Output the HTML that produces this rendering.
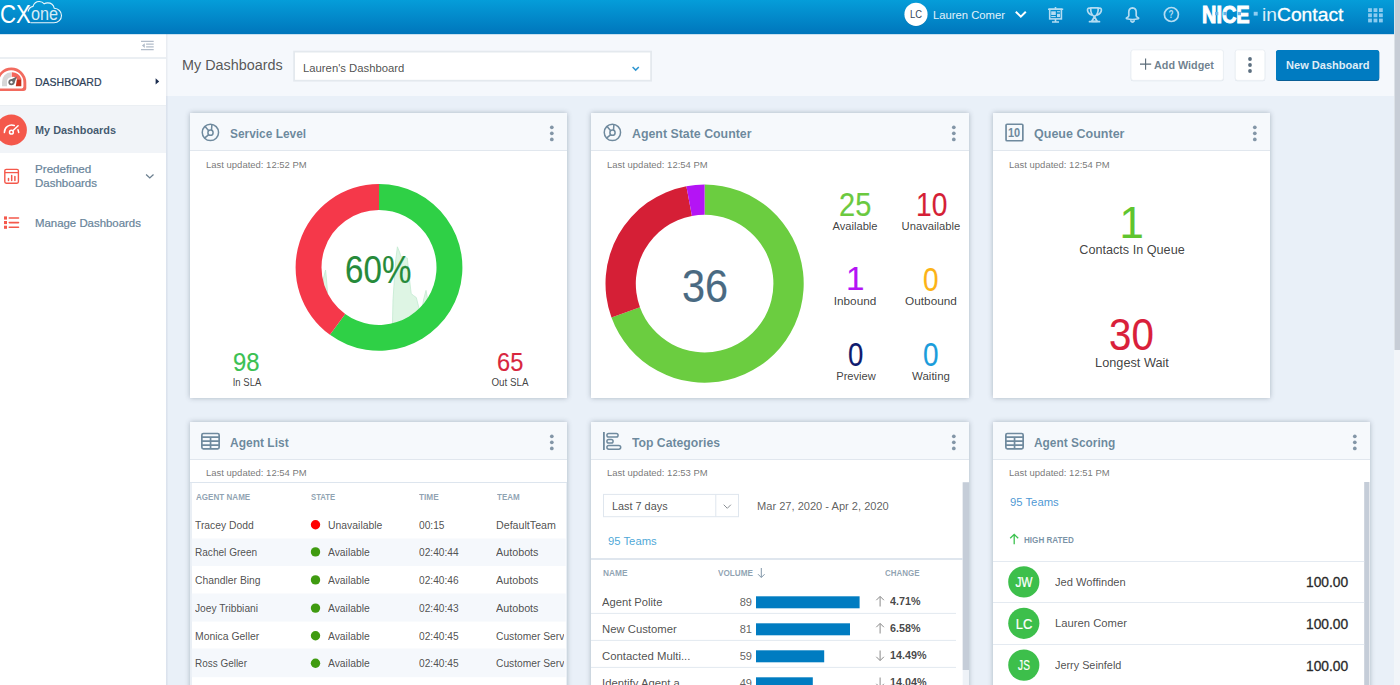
<!DOCTYPE html>
<html lang="en"><head><meta charset="utf-8"><title>My Dashboards</title>
<style>
*{margin:0;padding:0;box-sizing:border-box}
html,body{width:1400px;height:685px;overflow:hidden;background:#e9f0f8}
body{font-family:"Liberation Sans", "Noto Sans CJK SC", sans-serif;position:relative}
#root{position:absolute;left:0;top:0;width:1400px;height:685px;overflow:hidden}
#root div,#root svg{position:absolute}
#root .t{white-space:nowrap}
</style></head>
<body><div id="root">
<div style="left:0px;top:0px;width:1400px;height:685px;background:#e9f0f8"></div>
<div style="left:166px;top:34px;width:1234px;height:62px;background:#f5f8fc"></div>
<div style="left:0px;top:34px;width:166px;height:651px;background:#fff"></div>
<div style="left:166px;top:34px;width:1.5px;height:62px;background:linear-gradient(90deg,#e6eaf0,#f2f5f9)"></div>
<div style="left:166px;top:96px;width:1.5px;height:589px;background:linear-gradient(90deg,#d9e1ec,#e4eaf3)"></div>
<div style="left:0px;top:57px;width:166px;height:2px;background:#ebeff3"></div>
<div style="left:0px;top:105px;width:166px;height:1px;background:#ebeff3"></div>
<div style="left:0px;top:106px;width:166px;height:47px;background:#f1f4f8"></div>
<div style="left:0px;top:0px;width:1400px;height:34px;background:linear-gradient(#059dd9,#0076bc)"></div>
<div style="left:0px;top:34px;width:1400px;height:1px;background:rgba(0,115,186,.18)"></div>
<div class="t" style="top:-5.17px;font-size:26.15px;line-height:39px;color:#fff;left:-0.4px;transform:scaleX(0.8502);transform-origin:left center;">CX</div>
<svg style="left:26px;top:0px;width:38px;height:25px" viewBox="26 0 38 25"><path d="M28.2 11.200c.5-2.500 2.200-4.300 4.800-4.800c.9-2.900 3.300-4.900 6.300-4.900c2 0 3.700.8 4.900 2.300c1-.6 2.200-.9 3.400-.9c3.300 0 6 2.300 6.700 5.400c3.900.3 7.200 3.200 7.200 7.100c0 4.200-3.300 7.400-7.500 7.400H31" fill="none" stroke="#fff" stroke-width="1.100" stroke-linecap="round" opacity=".92"/></svg>
<div class="t" style="top:-0.59px;font-size:19.18px;line-height:29px;color:rgba(255,255,255,.85);left:31px;transform:scaleX(0.8443);transform-origin:left center;">one</div>
<svg style="left:903px;top:1px;width:26px;height:27px" viewBox="903 1 26 27"><circle cx="916" cy="14.700" r="11.600" fill="rgba(0,40,80,.18)"/><circle cx="916" cy="14.300" r="11.600" fill="#fff"/></svg>
<div class="t" style="top:7.01px;font-size:10.4px;line-height:16px;color:#33475b;left:916px;width:300px;margin-left:-150px;text-align:center;transform:scaleX(0.9001);transform-origin:center center;">LC</div>
<div class="t" style="top:6.7px;font-size:10.8px;line-height:16px;color:#e2f2fb;left:933px;transform:scaleX(1.0423);transform-origin:left center;">Lauren Comer</div>
<svg style="left:1013px;top:8px;width:16px;height:12px" viewBox="1013 8 16 12"><path d="M1015.800 11.700l5 5l5-5" fill="none" stroke="#fff" stroke-width="2"/></svg>
<svg style="left:1046px;top:5px;width:20px;height:20px" viewBox="1046 5 20 20"><g fill="none" stroke="#b4dcf2" stroke-width="1.600"><path d="M1048 9.200h15.200M1055.500 7v2.200M1055.500 19v3M1052 22h7"/><rect x="1049.700" y="9.200" width="11.700" height="9.700"/></g><g fill="#b4dcf2"><rect x="1051.200" y="11.300" width="4.600" height="3.700"/><rect x="1051.200" y="16" width="4.600" height="1.100"/><rect x="1057" y="11.200" width="3" height="1.100"/><rect x="1057" y="13.800" width="3" height="3.300"/></g></svg>
<svg style="left:1085px;top:5px;width:20px;height:20px" viewBox="1085 5 20 20"><g fill="none" stroke="#b4dcf2" stroke-width="1.700" stroke-linejoin="round"><path d="M1090.700 7.900h7.500c.2 4.200-1 7.200-3.750 8.700c-2.750-1.500-3.950-4.500-3.750-8.700z"/><path d="M1090.500 8.500c-1.600-.9-3 0-3 1.500c0 2.200 2 4.200 4.600 5.300M1098.400 8.500c1.600-.9 3 0 3 1.500c0 2.200-2 4.200-4.600 5.300"/><path d="M1094.450 16.800l-2.700 4.500h5.400z"/><path d="M1089.500 21.700h10" stroke-linecap="round"/></g></svg>
<svg style="left:1124px;top:5px;width:18px;height:20px" viewBox="1124 5 18 20"><g fill="none" stroke="#b4dcf2" stroke-width="1.700" stroke-linejoin="round"><path d="M1132.500 7.800c-2.400.3-3.700 2-3.700 4.300v3.700c0 .9-.8 1.400-2 1.900c-.6.300-.6.900 0 1.100c3.400.9 8 .9 11.400 0c.6-.2.600-.8 0-1.100c-1.200-.5-2-1-2-1.900v-3.700c0-2.300-1.300-4-3.700-4.300z"/><path d="M1130.800 20.900c.5.900 1.100 1.200 1.700 1.200s1.200-.3 1.700-1.200" stroke-linecap="round"/></g></svg>
<svg style="left:1162px;top:5px;width:19px;height:19px" viewBox="1162 5 19 19"><circle cx="1171.400" cy="14.500" r="7" fill="none" stroke="#b4dcf2" stroke-width="1.700"/></svg>
<div class="t" style="top:6.31px;font-size:10.5px;line-height:16px;color:#b4dcf2;font-weight:700;left:1171.4px;width:300px;margin-left:-150px;text-align:center;transform:scaleX(0.7810);transform-origin:center center;">?</div>
<div class="t" style="top:-2.44px;font-size:23.18px;line-height:35px;color:#fff;font-weight:700;-webkit-text-stroke:1px #fff;left:1202.2px;transform:scaleX(0.8610);transform-origin:left center;">NICE</div>
<svg style="left:1214px;top:11px;width:46px;height:6px" viewBox="1214 11 46 6"><g fill="#6ab6e9"><rect x="1215" y="11.900" width="3.300" height="3.300"/><rect x="1223.400" y="11.900" width="3.300" height="3.300"/><rect x="1237.700" y="11.900" width="3.300" height="3.300"/><rect x="1253.700" y="11.800" width="4" height="3.800" fill="#8fcdf1"/></g></svg>
<div class="t" style="top:0.53px;font-size:18.37px;line-height:28px;color:#fff;left:1262px;transform:scaleX(1.0489);transform-origin:left center;"><span style="opacity:.85">in</span><span style="-webkit-text-stroke:.3px #fff">Contact</span></div>
<svg style="left:1367px;top:7px;width:17px;height:17px" viewBox="1367 7 17 17"><g fill="#8ccbef"><rect x="1368.1" y="8.2" width="3.800" height="3.800"/><rect x="1373.55" y="8.2" width="3.800" height="3.800"/><rect x="1379" y="8.2" width="3.800" height="3.800"/><rect x="1368.1" y="13.4" width="3.800" height="3.800"/><rect x="1373.55" y="13.4" width="3.800" height="3.800"/><rect x="1379" y="13.4" width="3.800" height="3.800"/><rect x="1368.1" y="18.6" width="3.800" height="3.800"/><rect x="1373.55" y="18.6" width="3.800" height="3.800"/><rect x="1379" y="18.6" width="3.800" height="3.800"/></g></svg>
<div style="left:1394px;top:0px;width:6px;height:685px;background:#f3f6f9"></div>
<div style="left:1394px;top:0px;width:1px;height:349px;background:linear-gradient(90deg,#7fb4d6,#c5ccd6);opacity:.0"></div>
<svg style="left:1394px;top:0px;width:6px;height:685px" viewBox="1394 0 6 685"><rect x="1394.500" y="0" width="5.500" height="685" fill="#f2f5f9"/><rect x="1394.500" y="-1" width="5.500" height="351" fill="#c7cdd6"/></svg>
<svg style="left:140px;top:40px;width:15px;height:11px" viewBox="140 40 15 11"><g fill="none" stroke="#b3bdca" stroke-width="1.300"><path d="M141 41.400h12.700M146.100 44.200h7.600M146.100 46.900h7.600M141 49.600h12.700"/></g><path d="M141.900 45.600l2.900-2.300v4.600z" fill="#b3bdca"/></svg>
<svg style="left:0px;top:66px;width:28px;height:26px" viewBox="0 66 28 26"><path d="M-3.600 90.900V82.500A14.950 14.950 0 0 1 26.300 82.500V87.900a3 3 0 0 1-3 3z" fill="#f26b5f"/><path d="M-1 88.600V82.500A12.200 12.200 0 0 1 23.400 82.500V86.800a1.800 1.800 0 0 1-1.800 1.800z" fill="#fff"/><path d="M2 86.300V82.200A9.400 9.400 0 0 1 11.100 72.200V77.300A4.300 4.300 0 0 0 7 82.200V86.300z" fill="#d7d7d7"/><path d="M11.700 72.200A9.900 9.900 0 0 1 21.600 79.200H17A5 5 0 0 0 11.700 77z" fill="#f4655a"/><path d="M16.900 79.200H21.300V86.200H15.800z" fill="#c8301c"/><path d="M9.300 80.200L16.900 76.600L13.900 84.600z" fill="#6a6a6a"/><circle cx="11.400" cy="82.200" r="3" fill="#6a6a6a"/><circle cx="11.400" cy="82.200" r="1.200" fill="#fff"/></svg>
<div class="t" style="top:73.8px;font-size:11px;line-height:16px;color:#2c3e57;-webkit-text-stroke:0.2px #2c3e57;left:35px;transform:scaleX(0.9538);transform-origin:left center;">DASHBOARD</div>
<svg style="left:154px;top:77px;width:7px;height:9px" viewBox="154 77 7 9"><path d="M155.600 78.200L159.200 81.400L155.600 84.600z" fill="#1c2d4f"/></svg>
<svg style="left:0px;top:114px;width:28px;height:32px" viewBox="0 114 28 32"><circle cx="11.400" cy="129.900" r="15.500" fill="#f4584b"/><g fill="none" stroke="#fff" stroke-width="1.500" stroke-linecap="round"><path d="M4.400 132.600A7.300 7.300 0 0 1 14.300 125.500"/><path d="M12.800 130.800L18.100 125.700"/><path d="M18 129.700L18.700 132.400"/><circle cx="11.400" cy="132.200" r="1.900"/></g></svg>
<div class="t" style="top:122.2px;font-size:10.8px;line-height:16px;color:rgba(43,69,91,0.88);font-weight:700;left:35px;transform:scaleX(1.0080);transform-origin:left center;">My Dashboards</div>
<svg style="left:3px;top:167px;width:18px;height:18px" viewBox="3 167 18 18"><g fill="none" stroke="#f4584b"><rect x="4.800" y="169.400" width="13.600" height="13.800" rx="1.400" stroke-width="1.400"/><path d="M5 172.600h13.200" stroke-width="1.300"/><path d="M8.500 178.400v2.200M11.700 175.600v5M14.900 176.600v4" stroke-width="1.500" stroke-linecap="round"/></g></svg>
<div class="t" style="top:160.91px;font-size:11px;line-height:16px;color:#68849a;-webkit-text-stroke:0.2px #68849a;left:35px;transform:scaleX(1.0584);transform-origin:left center;">Predefined</div>
<div class="t" style="top:175.41px;font-size:11px;line-height:16px;color:#68849a;-webkit-text-stroke:0.2px #68849a;left:35px;transform:scaleX(1.0453);transform-origin:left center;">Dashboards</div>
<svg style="left:144px;top:172px;width:12px;height:8px" viewBox="144 172 12 8"><path d="M146.100 174.500l3.700 3.400l3.700-3.400" fill="none" stroke="#6b7f8f" stroke-width="1.300"/></svg>
<svg style="left:3px;top:215px;width:18px;height:15px" viewBox="3 215 18 15"><g fill="#f4584b"><rect x="4" y="216.400" width="3" height="3.200"/><rect x="4" y="221" width="3" height="3.100"/><rect x="4" y="225.700" width="3" height="3.100"/></g><path d="M9.300 218h9.200M9.300 222.600h9.200M9.300 227.200h9.200" stroke="#f4584b" stroke-width="1.600" stroke-linecap="round"/></svg>
<div class="t" style="top:214.61px;font-size:11px;line-height:16px;color:#68849a;-webkit-text-stroke:0.2px #68849a;left:35px;transform:scaleX(1.0369);transform-origin:left center;">Manage Dashboards</div>
<div class="t" style="top:54.91px;font-size:13.8px;line-height:21px;color:rgba(74,74,74,0.93);left:181.6px;transform:scaleX(1.0420);transform-origin:left center;">My Dashboards</div>
<svg style="left:292px;top:49px;width:362px;height:34px" viewBox="292 49 362 34"><rect x="294.100" y="51.600" width="357" height="29.100" fill="#fff" stroke="#e4e9ee" stroke-width="1.800"/><path d="M632.600 67l3.100 3.100l3.100-3.100" fill="none" stroke="#2f96d0" stroke-width="1.500"/></svg>
<div class="t" style="top:60.31px;font-size:10.8px;line-height:16px;color:rgba(68,68,68,0.93);left:302.6px;transform:scaleX(1.0463);transform-origin:left center;">Lauren's Dashboard</div>
<svg style="left:1128px;top:47px;width:254px;height:37px" viewBox="1128 47 254 37"><rect x="1130.700" y="50" width="93" height="31.200" rx="2.500" fill="#dfe5ec"/><rect x="1131" y="49.800" width="92.400" height="30.600" rx="2.500" fill="#fff" stroke="#e9edf2" stroke-width=".8"/><path d="M1145.600 58.500v11.200M1140 64.100h11.200" fill="none" stroke="#5a6b78" stroke-width="1.100"/><rect x="1234.900" y="50" width="30.300" height="31.200" rx="2.500" fill="#dfe5ec"/><rect x="1235.200" y="49.800" width="29.700" height="30.600" rx="2.500" fill="#fff" stroke="#e9edf2" stroke-width=".8"/><g fill="#5c6f80"><circle cx="1250" cy="59" r="1.900"/><circle cx="1250" cy="65" r="1.900"/><circle cx="1250" cy="71" r="1.900"/></g><rect x="1276" y="50.200" width="103.200" height="30.800" rx="2.500" fill="#0a5f96"/><rect x="1276" y="50" width="103.200" height="30" rx="2.500" fill="#007bc1"/></svg>
<div class="t" style="top:57.2px;font-size:10.8px;line-height:16px;color:rgba(92,111,128,0.88);font-weight:700;left:1154px;">Add Widget</div>
<div class="t" style="top:57.2px;font-size:10.8px;line-height:16px;color:rgba(255,255,255,0.88);font-weight:700;left:1286.2px;transform:scaleX(1.0239);transform-origin:left center;">New Dashboard</div>
<div style="left:190px;top:113px;width:377px;height:285px;background:#fff;box-shadow:0 0 5px rgba(30,45,65,.3)"></div>
<div style="left:190px;top:113px;width:377px;height:37px;background:#f6f9fc"></div>
<div style="left:190px;top:150px;width:377px;height:1px;background:#e1e7ee"></div>
<svg style="left:199.2px;top:121px;width:24px;height:24px" viewBox="199.2 121 24 24"><g fill="none" stroke="#6f8a9e" stroke-width="1.500"><circle cx="210.6" cy="132.4" r="8.150"/><circle cx="210.7" cy="132.7" r="2.600"/><path d="M212.1 124.4l-.4 5.700M205.3 126.4l3.600 4.300M204.7 138.1l4.300-3.500"/></g></svg>
<div class="t" style="top:124.9px;font-size:12.25px;line-height:18px;color:rgba(90,121,144,0.88);font-weight:700;left:230.3px;transform:scaleX(0.9717);transform-origin:left center;">Service Level</div>
<svg style="left:548px;top:124px;width:8px;height:20px" viewBox="548 124 8 20"><g fill="#8396a7"><circle cx="551.8" cy="127.3" r="1.850"/><circle cx="551.8" cy="133.35" r="1.850"/><circle cx="551.8" cy="139.4" r="1.850"/></g></svg>
<div class="t" style="top:157.8px;font-size:9.22px;line-height:14px;color:rgba(110,110,110,0.93);left:205.6px;transform:scaleX(1.0289);transform-origin:left center;">Last updated: 12:52 PM</div>
<svg style="left:190px;top:151px;width:377px;height:247px" viewBox="190 151 377 247"><path d="M320 312L321.500 292L323.500 278L325.600 270L326.600 281L327.600 293.700L329.500 312Z M392.300 332L393 300L395.500 262L397.400 246.800L399.500 252L401 256.700L404 257.300L407.300 258L409 275L411.200 293.700L413.500 295.500L416.300 297.600L418.900 307.800L421 316L423.500 300L426 290.400L427.800 300L430.500 314L430.500 332Z" fill="#def5e4" stroke="#c3ead0" stroke-width=".8"/><path d="M379.00 184.00A83.4 83.4 0 1 1 329.98 334.87L345.20 313.92A57.5 57.5 0 1 0 379.00 209.90Z" fill="#2fd046"/><path d="M329.98 334.87A83.4 83.4 0 0 1 379.00 184.00L379.00 209.90A57.5 57.5 0 0 0 345.20 313.92Z" fill="#f5384a"/></svg>
<div class="t" style="top:240.62px;font-size:38.3px;line-height:57px;color:#268a3a;-webkit-text-stroke:0.15px #268a3a;left:345.2px;transform:scaleX(0.8657);transform-origin:left center;">60%</div>
<div class="t" style="top:343.05px;font-size:26.15px;line-height:39px;color:#3bc153;-webkit-text-stroke:0.15px #3bc153;left:233.2px;transform:scaleX(0.9110);transform-origin:left center;">98</div>
<div class="t" style="top:374.9px;font-size:10px;line-height:15px;color:rgba(51,51,51,0.93);left:246.6px;width:300px;margin-left:-150px;text-align:center;transform:scaleX(0.9511);transform-origin:center center;">In SLA</div>
<div class="t" style="top:343.05px;font-size:26.15px;line-height:39px;color:#d8263e;-webkit-text-stroke:0.15px #d8263e;left:497.3px;transform:scaleX(0.9041);transform-origin:left center;">65</div>
<div class="t" style="top:374.9px;font-size:10px;line-height:15px;color:rgba(51,51,51,0.93);left:510.4px;width:300px;margin-left:-150px;text-align:center;transform:scaleX(0.9814);transform-origin:center center;">Out SLA</div>
<div style="left:591px;top:113px;width:378px;height:285px;background:#fff;box-shadow:0 0 5px rgba(30,45,65,.3)"></div>
<div style="left:591px;top:113px;width:378px;height:37px;background:#f6f9fc"></div>
<div style="left:591px;top:150px;width:378px;height:1px;background:#e1e7ee"></div>
<svg style="left:601px;top:121px;width:24px;height:24px" viewBox="601 121 24 24"><g fill="none" stroke="#6f8a9e" stroke-width="1.500"><circle cx="612.4" cy="132.4" r="8.150"/><circle cx="612.5" cy="132.7" r="2.600"/><path d="M613.9 124.4l-.4 5.700M607.1 126.4l3.600 4.300M606.5 138.1l4.300-3.500"/></g></svg>
<div class="t" style="top:124.9px;font-size:12.25px;line-height:18px;color:rgba(90,121,144,0.88);font-weight:700;left:632.1px;transform:scaleX(1.0094);transform-origin:left center;">Agent State Counter</div>
<svg style="left:950px;top:124px;width:8px;height:20px" viewBox="950 124 8 20"><g fill="#8396a7"><circle cx="953.8" cy="127.3" r="1.850"/><circle cx="953.8" cy="133.35" r="1.850"/><circle cx="953.8" cy="139.4" r="1.850"/></g></svg>
<div class="t" style="top:157.8px;font-size:9.22px;line-height:14px;color:rgba(110,110,110,0.93);left:606.6px;transform:scaleX(1.0289);transform-origin:left center;">Last updated: 12:54 PM</div>
<svg style="left:591px;top:151px;width:378px;height:247px" viewBox="591 151 378 247"><path d="M704.60 184.50A99.1 99.1 0 1 1 611.48 317.49L639.95 307.13A68.8 68.8 0 1 0 704.60 214.80Z" fill="#6bcd40"/><path d="M611.48 317.49A99.1 99.1 0 0 1 686.37 186.19L691.94 215.97A68.8 68.8 0 0 0 639.95 307.13Z" fill="#d51f36"/><path d="M686.37 186.19A99.1 99.1 0 0 1 704.60 184.50L704.60 214.80A68.8 68.8 0 0 0 691.94 215.97Z" fill="#b414f5"/></svg>
<div class="t" style="top:253.04px;font-size:45.37px;line-height:68px;color:#4a6a82;-webkit-text-stroke:0.15px #4a6a82;left:681.5px;transform:scaleX(0.9133);transform-origin:left center;">36</div>
<div class="t" style="top:179.57px;font-size:32.93px;line-height:49px;color:#6bc93f;-webkit-text-stroke:0.15px #6bc93f;left:839.1px;transform:scaleX(0.8816);transform-origin:left center;">25</div>
<div class="t" style="top:179.57px;font-size:32.93px;line-height:49px;color:#d51f36;-webkit-text-stroke:0.15px #d51f36;left:915.9px;transform:scaleX(0.8543);transform-origin:left center;">10</div>
<div class="t" style="top:254.4px;font-size:33.16px;line-height:50px;color:#b414f5;-webkit-text-stroke:0.15px #b414f5;left:846.02px;">1</div>
<div class="t" style="top:254.57px;font-size:33.36px;line-height:50px;color:#fcb316;-webkit-text-stroke:0.15px #fcb316;left:922.9px;transform:scaleX(0.8372);transform-origin:left center;">0</div>
<div class="t" style="top:329.57px;font-size:33.36px;line-height:50px;color:#0f1b6e;-webkit-text-stroke:0.15px #0f1b6e;left:847.6px;transform:scaleX(0.8264);transform-origin:left center;">0</div>
<div class="t" style="top:329.57px;font-size:33.36px;line-height:50px;color:#1b9ddb;-webkit-text-stroke:0.15px #1b9ddb;left:922.9px;transform:scaleX(0.8372);transform-origin:left center;">0</div>
<div class="t" style="top:217.81px;font-size:10.8px;line-height:16px;color:rgba(51,51,51,0.93);left:855.1px;width:300px;margin-left:-150px;text-align:center;transform:scaleX(1.0333);transform-origin:center center;">Available</div>
<div class="t" style="top:217.81px;font-size:10.8px;line-height:16px;color:rgba(51,51,51,0.93);left:930.7px;width:300px;margin-left:-150px;text-align:center;transform:scaleX(1.0410);transform-origin:center center;">Unavailable</div>
<div class="t" style="top:292.81px;font-size:10.8px;line-height:16px;color:rgba(51,51,51,0.93);left:855.4px;width:300px;margin-left:-150px;text-align:center;transform:scaleX(1.0913);transform-origin:center center;">Inbound</div>
<div class="t" style="top:292.81px;font-size:10.8px;line-height:16px;color:rgba(51,51,51,0.93);left:930.5px;width:300px;margin-left:-150px;text-align:center;transform:scaleX(1.0926);transform-origin:center center;">Outbound</div>
<div class="t" style="top:367.81px;font-size:10.8px;line-height:16px;color:rgba(51,51,51,0.93);left:855.5px;width:300px;margin-left:-150px;text-align:center;transform:scaleX(1.0293);transform-origin:center center;">Preview</div>
<div class="t" style="top:367.81px;font-size:10.8px;line-height:16px;color:rgba(51,51,51,0.93);left:930.5px;width:300px;margin-left:-150px;text-align:center;transform:scaleX(1.0606);transform-origin:center center;">Waiting</div>
<div style="left:993px;top:113px;width:277px;height:285px;background:#fff;box-shadow:0 0 5px rgba(30,45,65,.3)"></div>
<div style="left:993px;top:113px;width:277px;height:37px;background:#f6f9fc"></div>
<div style="left:993px;top:150px;width:277px;height:1px;background:#e1e7ee"></div>
<svg style="left:1003.5px;top:122px;width:24px;height:22px" viewBox="1003.5 122 24 22"><rect x="1005.55" y="124.25" width="16.800" height="16.500" rx="1" fill="none" stroke="#6f8a9e" stroke-width="1.700"/></svg>
<div class="t" style="top:122.97px;font-size:13px;line-height:20px;color:#6f8a9e;font-weight:700;left:1007.7px;transform:scaleX(0.8433);transform-origin:left center;">10</div>
<div class="t" style="top:124.9px;font-size:12.25px;line-height:18px;color:rgba(90,121,144,0.88);font-weight:700;left:1033.6px;transform:scaleX(1.0228);transform-origin:left center;">Queue Counter</div>
<svg style="left:1251px;top:124px;width:8px;height:20px" viewBox="1251 124 8 20"><g fill="#8396a7"><circle cx="1254.8" cy="127.3" r="1.850"/><circle cx="1254.8" cy="133.35" r="1.850"/><circle cx="1254.8" cy="139.4" r="1.850"/></g></svg>
<div class="t" style="top:157.8px;font-size:9.22px;line-height:14px;color:rgba(110,110,110,0.93);left:1008.6px;transform:scaleX(1.0289);transform-origin:left center;">Last updated: 12:54 PM</div>
<div class="t" style="top:189.91px;font-size:43.78px;line-height:66px;color:#5fc52e;-webkit-text-stroke:0.15px #5fc52e;left:1119.53px;">1</div>
<div class="t" style="top:241.01px;font-size:12.25px;line-height:18px;color:rgba(51,51,51,0.93);left:1131.5px;width:300px;margin-left:-150px;text-align:center;transform:scaleX(1.0323);transform-origin:center center;">Contacts In Queue</div>
<div class="t" style="top:303.47px;font-size:43.53px;line-height:65px;color:#d9203a;-webkit-text-stroke:0.15px #d9203a;left:1108.8px;transform:scaleX(0.9250);transform-origin:left center;">30</div>
<div class="t" style="top:353.7px;font-size:12.25px;line-height:18px;color:rgba(51,51,51,0.93);left:1131.5px;width:300px;margin-left:-150px;text-align:center;transform:scaleX(1.0385);transform-origin:center center;">Longest Wait</div>
<div style="left:190px;top:422px;width:377px;height:300px;background:#fff;box-shadow:0 0 5px rgba(30,45,65,.3)"></div>
<div style="left:190px;top:422px;width:377px;height:37px;background:#f6f9fc"></div>
<div style="left:190px;top:459px;width:377px;height:1px;background:#e1e7ee"></div>
<svg style="left:200.2px;top:431px;width:24px;height:22px" viewBox="200.2 431 24 22"><g fill="none" stroke="#6f8a9e" stroke-width="1.700"><rect x="202.05" y="433.5" width="17.300" height="15.300" rx="1.500"/><path d="M202.05 437.1h17.300M202.05 441.1h17.300M202.05 445.1h17.300M210.75 437.1v11.500"/></g></svg>
<div class="t" style="top:433.9px;font-size:12.25px;line-height:18px;color:rgba(90,121,144,0.88);font-weight:700;left:230.3px;transform:scaleX(0.9791);transform-origin:left center;">Agent List</div>
<svg style="left:548px;top:433px;width:8px;height:20px" viewBox="548 433 8 20"><g fill="#8396a7"><circle cx="551.8" cy="436.3" r="1.850"/><circle cx="551.8" cy="442.35" r="1.850"/><circle cx="551.8" cy="448.4" r="1.850"/></g></svg>
<div class="t" style="top:465.8px;font-size:9.22px;line-height:14px;color:rgba(110,110,110,0.93);left:205.6px;transform:scaleX(1.0289);transform-origin:left center;">Last updated: 12:54 PM</div>
<div style="left:190px;top:482px;width:377px;height:1px;background:#dde5ee"></div>
<div style="left:190px;top:483px;width:1.8px;height:220px;background:#eaeff5"></div>
<div style="left:565.7px;top:483px;width:1.3px;height:220px;background:#eaeff5"></div>
<svg style="left:191px;top:538px;width:376px;height:147px" viewBox="191 538 376 147"><rect x="191.800" y="538.5" width="373.900" height="27.5" fill="#f5f8fc"/><rect x="191.800" y="593.5" width="373.900" height="28.1" fill="#f5f8fc"/><rect x="191.800" y="648.5" width="373.900" height="28.7" fill="#f5f8fc"/></svg>
<div class="t" style="top:491.31px;font-size:8.4px;line-height:13px;color:rgba(129,150,168,0.88);font-weight:700;left:195.5px;transform:scaleX(0.9634);transform-origin:left center;">AGENT NAME</div>
<div class="t" style="top:491.31px;font-size:8.4px;line-height:13px;color:rgba(129,150,168,0.88);font-weight:700;left:311.1px;transform:scaleX(0.9261);transform-origin:left center;">STATE</div>
<div class="t" style="top:491.31px;font-size:8.4px;line-height:13px;color:rgba(129,150,168,0.88);font-weight:700;left:419.2px;transform:scaleX(0.9836);transform-origin:left center;">TIME</div>
<div class="t" style="top:491.31px;font-size:8.4px;line-height:13px;color:rgba(129,150,168,0.88);font-weight:700;left:496.7px;transform:scaleX(0.9552);transform-origin:left center;">TEAM</div>
<div class="t" style="top:517.81px;font-size:10px;line-height:15px;color:rgba(68,68,68,0.93);left:195.2px;transform:scaleX(1.0316);transform-origin:left center;">Tracey Dodd</div>
<div class="t" style="top:517.81px;font-size:10px;line-height:15px;color:rgba(68,68,68,0.93);left:328.1px;transform:scaleX(1.0410);transform-origin:left center;">Unavailable</div>
<div class="t" style="top:517.81px;font-size:10px;line-height:15px;color:rgba(68,68,68,0.93);left:419px;transform:scaleX(1.0187);transform-origin:left center;">00:15</div>
<div class="t" style="top:517.81px;font-size:10px;line-height:15px;color:rgba(68,68,68,0.93);left:496.1px;transform:scaleX(1.0679);transform-origin:left center;">DefaultTeam</div>
<div class="t" style="top:545.02px;font-size:10px;line-height:15px;color:rgba(68,68,68,0.93);left:195.2px;transform:scaleX(1.0066);transform-origin:left center;">Rachel Green</div>
<div class="t" style="top:545.01px;font-size:10px;line-height:15px;color:rgba(68,68,68,0.93);left:328.1px;transform:scaleX(1.0333);transform-origin:left center;">Available</div>
<div class="t" style="top:545.02px;font-size:10px;line-height:15px;color:rgba(68,68,68,0.93);left:419px;transform:scaleX(1.0161);transform-origin:left center;">02:40:44</div>
<div class="t" style="top:545.02px;font-size:10px;line-height:15px;color:rgba(68,68,68,0.93);left:496.1px;transform:scaleX(1.0764);transform-origin:left center;">Autobots</div>
<div class="t" style="top:573.02px;font-size:10px;line-height:15px;color:rgba(68,68,68,0.93);left:195.2px;transform:scaleX(1.0355);transform-origin:left center;">Chandler Bing</div>
<div class="t" style="top:573.01px;font-size:10px;line-height:15px;color:rgba(68,68,68,0.93);left:328.1px;transform:scaleX(1.0333);transform-origin:left center;">Available</div>
<div class="t" style="top:573.02px;font-size:10px;line-height:15px;color:rgba(68,68,68,0.93);left:419px;transform:scaleX(1.0161);transform-origin:left center;">02:40:46</div>
<div class="t" style="top:573.02px;font-size:10px;line-height:15px;color:rgba(68,68,68,0.93);left:496.1px;transform:scaleX(1.0764);transform-origin:left center;">Autobots</div>
<div class="t" style="top:601.22px;font-size:10px;line-height:15px;color:rgba(68,68,68,0.93);left:195.2px;transform:scaleX(1.0215);transform-origin:left center;">Joey Tribbiani</div>
<div class="t" style="top:601.21px;font-size:10px;line-height:15px;color:rgba(68,68,68,0.93);left:328.1px;transform:scaleX(1.0333);transform-origin:left center;">Available</div>
<div class="t" style="top:601.22px;font-size:10px;line-height:15px;color:rgba(68,68,68,0.93);left:419px;transform:scaleX(1.0161);transform-origin:left center;">02:40:43</div>
<div class="t" style="top:601.22px;font-size:10px;line-height:15px;color:rgba(68,68,68,0.93);left:496.1px;transform:scaleX(1.0764);transform-origin:left center;">Autobots</div>
<div class="t" style="top:628.91px;font-size:10px;line-height:15px;color:rgba(68,68,68,0.93);left:195.2px;transform:scaleX(1.0413);transform-origin:left center;">Monica Geller</div>
<div class="t" style="top:628.91px;font-size:10px;line-height:15px;color:rgba(68,68,68,0.93);left:328.1px;transform:scaleX(1.0333);transform-origin:left center;">Available</div>
<div class="t" style="top:628.91px;font-size:10px;line-height:15px;color:rgba(68,68,68,0.93);left:419px;transform:scaleX(1.0161);transform-origin:left center;">02:40:45</div>
<div style="left:490px;top:625.9px;width:74.300px;height:20px;overflow:hidden">
<div class="t" style="top:3.01px;font-size:10px;line-height:15px;color:rgba(68,68,68,0.93);left:6.1px;transform:scaleX(1.0250);transform-origin:left center;">Customer Service</div>
</div>
<div class="t" style="top:656.31px;font-size:10px;line-height:15px;color:rgba(68,68,68,0.93);left:195.2px;transform:scaleX(0.9943);transform-origin:left center;">Ross Geller</div>
<div class="t" style="top:656.31px;font-size:10px;line-height:15px;color:rgba(68,68,68,0.93);left:328.1px;transform:scaleX(1.0333);transform-origin:left center;">Available</div>
<div class="t" style="top:656.31px;font-size:10px;line-height:15px;color:rgba(68,68,68,0.93);left:419px;transform:scaleX(1.0161);transform-origin:left center;">02:40:45</div>
<div style="left:490px;top:653.3px;width:74.300px;height:20px;overflow:hidden">
<div class="t" style="top:3.01px;font-size:10px;line-height:15px;color:rgba(68,68,68,0.93);left:6.1px;transform:scaleX(1.0250);transform-origin:left center;">Customer Service</div>
</div>
<svg style="left:308px;top:515px;width:14px;height:170px" viewBox="308 515 14 170"><circle cx="315.500" cy="524.7" r="4.700" fill="#ff0000"/><circle cx="315.500" cy="551.9" r="4.700" fill="#3f9b10"/><circle cx="315.500" cy="579.9" r="4.700" fill="#3f9b10"/><circle cx="315.500" cy="608.1" r="4.700" fill="#3f9b10"/><circle cx="315.500" cy="635.8" r="4.700" fill="#3f9b10"/><circle cx="315.500" cy="663.2" r="4.700" fill="#3f9b10"/></svg>
<div style="left:591px;top:422px;width:378px;height:300px;background:#fff;box-shadow:0 0 5px rgba(30,45,65,.3)"></div>
<div style="left:591px;top:422px;width:378px;height:37px;background:#f6f9fc"></div>
<div style="left:591px;top:459px;width:378px;height:1px;background:#e1e7ee"></div>
<svg style="left:602px;top:430px;width:24px;height:24px" viewBox="602 430 24 24"><g fill="none" stroke="#6f8a9e"><path d="M603.9 432.1v18" stroke-width="1.800"/><g stroke-width="1.500"><rect x="606.9" y="433.4" width="11.200" height="3.600" rx="1.800"/><rect x="606.9" y="439.4" width="6.200" height="3.600" rx="1.800"/><rect x="606.9" y="445.4" width="13.800" height="3.800" rx="1.900"/></g></g></svg>
<div class="t" style="top:433.9px;font-size:12.25px;line-height:18px;color:rgba(90,121,144,0.88);font-weight:700;left:632.1px;transform:scaleX(0.9968);transform-origin:left center;">Top Categories</div>
<svg style="left:950px;top:433px;width:8px;height:20px" viewBox="950 433 8 20"><g fill="#8396a7"><circle cx="953.8" cy="436.3" r="1.850"/><circle cx="953.8" cy="442.35" r="1.850"/><circle cx="953.8" cy="448.4" r="1.850"/></g></svg>
<div class="t" style="top:465.8px;font-size:9.22px;line-height:14px;color:rgba(110,110,110,0.93);left:606.6px;transform:scaleX(1.0289);transform-origin:left center;">Last updated: 12:53 PM</div>
<svg style="left:962px;top:482px;width:7px;height:203px" viewBox="962 482 7 203"><rect x="962.700" y="482" width="6.300" height="203" fill="#eef2f7"/><rect x="962.700" y="482.300" width="6.300" height="187.700" fill="#c5cdd8"/></svg>
<svg style="left:601px;top:492px;width:140px;height:27px" viewBox="601 492 140 27"><rect x="603.500" y="494.400" width="135" height="22.300" fill="#fff" stroke="#dfe6ee" stroke-width="1"/><path d="M715.800 494.400v22.300" stroke="#dfe6ee" stroke-width="1"/><path d="M723.700 504.700l3.600 3.600l3.600-3.600" fill="none" stroke="#8a8f94" stroke-width="1"/></svg>
<div class="t" style="top:497.6px;font-size:10.8px;line-height:16px;color:rgba(68,68,68,0.93);left:611.7px;transform:scaleX(1.0065);transform-origin:left center;">Last 7 days</div>
<div class="t" style="top:497.6px;font-size:10.8px;line-height:16px;color:rgba(85,85,85,0.93);left:757.3px;transform:scaleX(1.0259);transform-origin:left center;">Mar 27, 2020 - Apr 2, 2020</div>
<div class="t" style="top:533.02px;font-size:10.9px;line-height:16px;color:rgba(62,159,212,0.93);left:607.5px;transform:scaleX(1.0362);transform-origin:left center;">95 Teams</div>
<div style="left:591px;top:558px;width:371.7px;height:1.5px;background:#dfe6ee"></div>
<div class="t" style="top:567.31px;font-size:8.4px;line-height:13px;color:rgba(129,150,168,0.88);font-weight:700;left:602.5px;transform:scaleX(0.9930);transform-origin:left center;">NAME</div>
<div class="t" style="top:567.31px;font-size:8.4px;line-height:13px;color:rgba(129,150,168,0.88);font-weight:700;left:718.2px;transform:scaleX(0.9765);transform-origin:left center;">VOLUME</div>
<svg style="left:756px;top:566px;width:11px;height:13px" viewBox="756 566 11 13"><path d="M761.300 568v9.300M758 574.200l3.300 3.300l3.300-3.300" fill="none" stroke="#8196a8" stroke-width="1"/></svg>
<div class="t" style="top:567.31px;font-size:8.4px;line-height:13px;color:rgba(129,150,168,0.88);font-weight:700;left:884.8px;transform:scaleX(0.9492);transform-origin:left center;">CHANGE</div>
<div class="t" style="top:593.9px;font-size:10.8px;line-height:16px;color:rgba(68,68,68,0.93);left:602.3px;transform:scaleX(1.0370);transform-origin:left center;">Agent Polite</div>
<div class="t" style="top:593.9px;font-size:10.8px;line-height:16px;color:rgba(85,85,85,0.93);right:648.1px;transform:scaleX(1.0286);transform-origin:right center;">89</div>
<div class="t" style="top:593.4px;font-size:10.7px;line-height:16px;color:rgba(46,46,46,0.88);font-weight:700;left:889.5px;transform:scaleX(1.0062);transform-origin:left center;">4.71%</div>
<div class="t" style="top:620.9px;font-size:10.8px;line-height:16px;color:rgba(68,68,68,0.93);left:602.3px;transform:scaleX(1.0468);transform-origin:left center;">New Customer</div>
<div class="t" style="top:620.9px;font-size:10.8px;line-height:16px;color:rgba(85,85,85,0.93);right:648.1px;transform:scaleX(1.0286);transform-origin:right center;">81</div>
<div class="t" style="top:620.4px;font-size:10.7px;line-height:16px;color:rgba(46,46,46,0.88);font-weight:700;left:889.5px;transform:scaleX(1.0062);transform-origin:left center;">6.58%</div>
<div class="t" style="top:647.9px;font-size:10.8px;line-height:16px;color:rgba(68,68,68,0.93);left:602.3px;transform:scaleX(1.0523);transform-origin:left center;">Contacted Multi...</div>
<div class="t" style="top:647.9px;font-size:10.8px;line-height:16px;color:rgba(85,85,85,0.93);right:648.1px;transform:scaleX(1.0286);transform-origin:right center;">59</div>
<div class="t" style="top:647.4px;font-size:10.7px;line-height:16px;color:rgba(46,46,46,0.88);font-weight:700;left:889.5px;transform:scaleX(1.0099);transform-origin:left center;">14.49%</div>
<div class="t" style="top:674.9px;font-size:10.8px;line-height:16px;color:rgba(68,68,68,0.93);left:602.3px;transform:scaleX(1.0459);transform-origin:left center;">Identify Agent a...</div>
<div class="t" style="top:674.9px;font-size:10.8px;line-height:16px;color:rgba(85,85,85,0.93);right:648.1px;transform:scaleX(1.0286);transform-origin:right center;">49</div>
<div class="t" style="top:674.4px;font-size:10.7px;line-height:16px;color:rgba(46,46,46,0.88);font-weight:700;left:889.5px;transform:scaleX(1.0099);transform-origin:left center;">14.04%</div>
<svg style="left:591px;top:590px;width:372px;height:95px" viewBox="591 590 372 95"><rect x="756" y="596.3" width="103.6" height="12" fill="#007cc1"/><path d="M880.100 606.5v-9.800M876.300 600.2l3.800-3.800l3.800 3.800" fill="none" stroke="#8a8a8a" stroke-width="1"/><rect x="591" y="612.9" width="365" height="1" fill="#e3e9f0"/><rect x="756" y="623.3" width="94" height="12" fill="#007cc1"/><path d="M880.100 633.5v-9.800M876.300 627.2l3.800-3.800l3.800 3.800" fill="none" stroke="#8a8a8a" stroke-width="1"/><rect x="591" y="639.9" width="365" height="1" fill="#e3e9f0"/><rect x="756" y="650.3" width="68.2" height="12" fill="#007cc1"/><path d="M880.100 650.5v9.800M876.300 656.8l3.800 3.800l3.800-3.800" fill="none" stroke="#8a8a8a" stroke-width="1"/><rect x="591" y="666.9" width="365" height="1" fill="#e3e9f0"/><rect x="756" y="677.3" width="56.8" height="12" fill="#007cc1"/><path d="M880.100 677.5v9.800M876.300 683.8l3.800 3.800l3.800-3.800" fill="none" stroke="#8a8a8a" stroke-width="1"/><rect x="591" y="693.9" width="365" height="1" fill="#e3e9f0"/></svg>
<div style="left:993px;top:422px;width:377px;height:300px;background:#fff;box-shadow:0 0 5px rgba(30,45,65,.3)"></div>
<div style="left:993px;top:422px;width:377px;height:37px;background:#f6f9fc"></div>
<div style="left:993px;top:459px;width:377px;height:1px;background:#e1e7ee"></div>
<svg style="left:1003.5px;top:431px;width:24px;height:22px" viewBox="1003.5 431 24 22"><g fill="none" stroke="#6f8a9e" stroke-width="1.700"><rect x="1005.35" y="433.5" width="17.300" height="15.300" rx="1.500"/><path d="M1005.35 437.1h17.300M1005.35 441.1h17.300M1005.35 445.1h17.300M1014.05 437.1v11.500"/></g></svg>
<div class="t" style="top:433.9px;font-size:12.25px;line-height:18px;color:rgba(90,121,144,0.88);font-weight:700;left:1033.6px;transform:scaleX(0.9714);transform-origin:left center;">Agent Scoring</div>
<svg style="left:1351px;top:433px;width:8px;height:20px" viewBox="1351 433 8 20"><g fill="#8396a7"><circle cx="1354.8" cy="436.3" r="1.850"/><circle cx="1354.8" cy="442.35" r="1.850"/><circle cx="1354.8" cy="448.4" r="1.850"/></g></svg>
<div class="t" style="top:465.8px;font-size:9.22px;line-height:14px;color:rgba(110,110,110,0.93);left:1008.6px;transform:scaleX(1.0289);transform-origin:left center;">Last updated: 12:51 PM</div>
<svg style="left:1363px;top:482px;width:7px;height:203px" viewBox="1363 482 7 203"><rect x="1364.200" y="482" width="5" height="203" fill="#c5cdd8"/><rect x="1369.200" y="482" width=".8" height="203" fill="#e1e5ea"/></svg>
<div class="t" style="top:494.22px;font-size:10.9px;line-height:16px;color:rgba(62,143,208,0.93);left:1009.7px;transform:scaleX(1.0362);transform-origin:left center;">95 Teams</div>
<svg style="left:1008px;top:532px;width:13px;height:14px" viewBox="1008 532 13 14"><path d="M1014.200 544.200v-9.800M1010.200 538.300l4-4l4 4" fill="none" stroke="#3cc24f" stroke-width="1.300"/></svg>
<div class="t" style="top:533.6px;font-size:8.4px;line-height:13px;color:rgba(104,132,154,0.88);font-weight:700;left:1023.8px;transform:scaleX(0.9675);transform-origin:left center;">HIGH RATED</div>
<svg style="left:993px;top:555px;width:372px;height:130px" viewBox="993 555 372 130"><rect x="993" y="561" width="371.200" height="1" fill="#e4eaf1"/><circle cx="1023.800" cy="581.9" r="15.600" fill="#3dbf4b"/><rect x="993" y="602" width="371.200" height="1" fill="#e4eaf1"/><circle cx="1023.800" cy="623.3" r="15.600" fill="#3dbf4b"/><rect x="993" y="644" width="371.200" height="1" fill="#e4eaf1"/><circle cx="1023.800" cy="665.1" r="15.600" fill="#3dbf4b"/></svg>
<div class="t" style="top:571.1px;font-size:14.4px;line-height:22px;color:#fff;-webkit-text-stroke:0.2px #fff;left:1023.9px;width:300px;margin-left:-150px;text-align:center;transform:scaleX(0.8256);transform-origin:center center;">JW</div>
<div class="t" style="top:573.81px;font-size:10.8px;line-height:16px;color:rgba(68,68,68,0.93);left:1055.1px;transform:scaleX(1.0305);transform-origin:left center;">Jed Woffinden</div>
<div class="t" style="top:571.46px;font-size:14.42px;line-height:22px;color:#2a2a2a;-webkit-text-stroke:0.3px #2a2a2a;left:1306.2px;transform:scaleX(0.9574);transform-origin:left center;">100.00</div>
<div class="t" style="top:612.51px;font-size:14.4px;line-height:22px;color:#fff;-webkit-text-stroke:0.2px #fff;left:1023.9px;width:300px;margin-left:-150px;text-align:center;transform:scaleX(0.9007);transform-origin:center center;">LC</div>
<div class="t" style="top:615.2px;font-size:10.8px;line-height:16px;color:rgba(68,68,68,0.93);left:1055.1px;transform:scaleX(1.0423);transform-origin:left center;">Lauren Comer</div>
<div class="t" style="top:612.86px;font-size:14.42px;line-height:22px;color:#2a2a2a;-webkit-text-stroke:0.3px #2a2a2a;left:1306.2px;transform:scaleX(0.9574);transform-origin:left center;">100.00</div>
<div class="t" style="top:654.31px;font-size:14.4px;line-height:22px;color:#fff;-webkit-text-stroke:0.2px #fff;left:1023.9px;width:300px;margin-left:-150px;text-align:center;transform:scaleX(0.7005);transform-origin:center center;">JS</div>
<div class="t" style="top:657.01px;font-size:10.8px;line-height:16px;color:rgba(68,68,68,0.93);left:1055.1px;transform:scaleX(1.0052);transform-origin:left center;">Jerry Seinfeld</div>
<div class="t" style="top:654.66px;font-size:14.42px;line-height:22px;color:#2a2a2a;-webkit-text-stroke:0.3px #2a2a2a;left:1306.2px;transform:scaleX(0.9574);transform-origin:left center;">100.00</div>
</div></body></html>
